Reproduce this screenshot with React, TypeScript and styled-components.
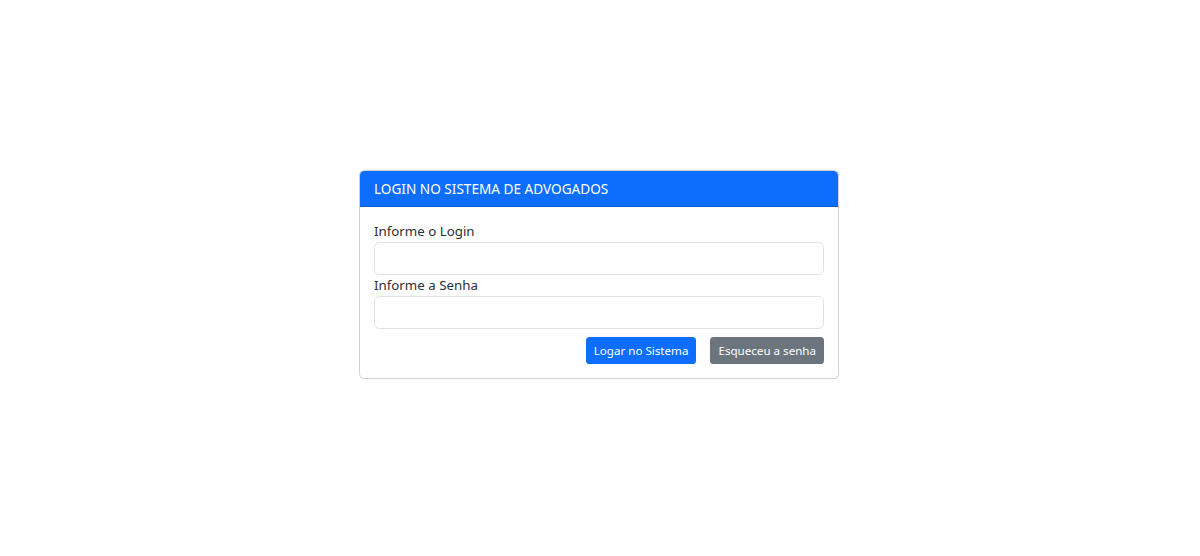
import React from "react";
import styled, { createGlobalStyle } from "styled-components";

const Global = createGlobalStyle`
  html, body { margin: 0; padding: 0; background: #ffffff; }
  body { font-family: "Noto Sans", "Open Sans", sans-serif; color: #212529; }
  * { box-sizing: border-box; }
`;

const Page = styled.div`
  width: 1200px;
  height: 556px;
  padding-top: 170px;
  padding-left: 359px;
`;

const Card = styled.div`
  width: 480px;
  border: 1px solid rgba(0, 0, 0, 0.175);
  border-radius: 5.4px;
  background: #fff;
  overflow: hidden;
`;

const Header = styled.div`
  background: #0d6efd;
  color: #fff;
  font-size: 13.6px;
  line-height: 21px;
  padding: 7px 14px;
  border-bottom: 1px solid rgba(0, 0, 0, 0.175);
`;

const Body = styled.div`
  padding: 14px 14px 14px 14px;
  display: flex;
  flex-direction: column;
`;

const Label = styled.label`
  display: block;
  font-size: 13.3px;
  line-height: 21px;
  color: #2b3035;
`;

const Input = styled.input`
  display: block;
  width: 100%;
  height: 33px;
  border: 1px solid #dee2e6;
  border-radius: 5.4px;
  font: inherit;
  padding: 0 11px;
  outline: none;
`;

const Actions = styled.div`
  display: flex;
  justify-content: flex-end;
  gap: 14px;
  margin-top: 8px;
`;

const Button = styled.button<{ $variant: "primary" | "secondary" }>`
  height: 27px;
  padding: 0 8px;
  border: none;
  border-radius: 3.6px;
  font-family: inherit;
  font-size: 11.6px;
  color: #fff;
  background: ${(p) => (p.$variant === "primary" ? "#0d6efd" : "#6c757d")};
  cursor: pointer;
`;

export default function App() {
  return (
    <>
      <Global />
      <Page>
        <Card>
          <Header>LOGIN NO SISTEMA DE ADVOGADOS</Header>
          <Body>
            <Label>Informe o Login</Label>
            <Input type="text" />
            <Label>Informe a Senha</Label>
            <Input type="password" />
            <Actions>
              <Button $variant="primary">Logar no Sistema</Button>
              <Button $variant="secondary">Esqueceu a senha</Button>
            </Actions>
          </Body>
        </Card>
      </Page>
    </>
  );
}
